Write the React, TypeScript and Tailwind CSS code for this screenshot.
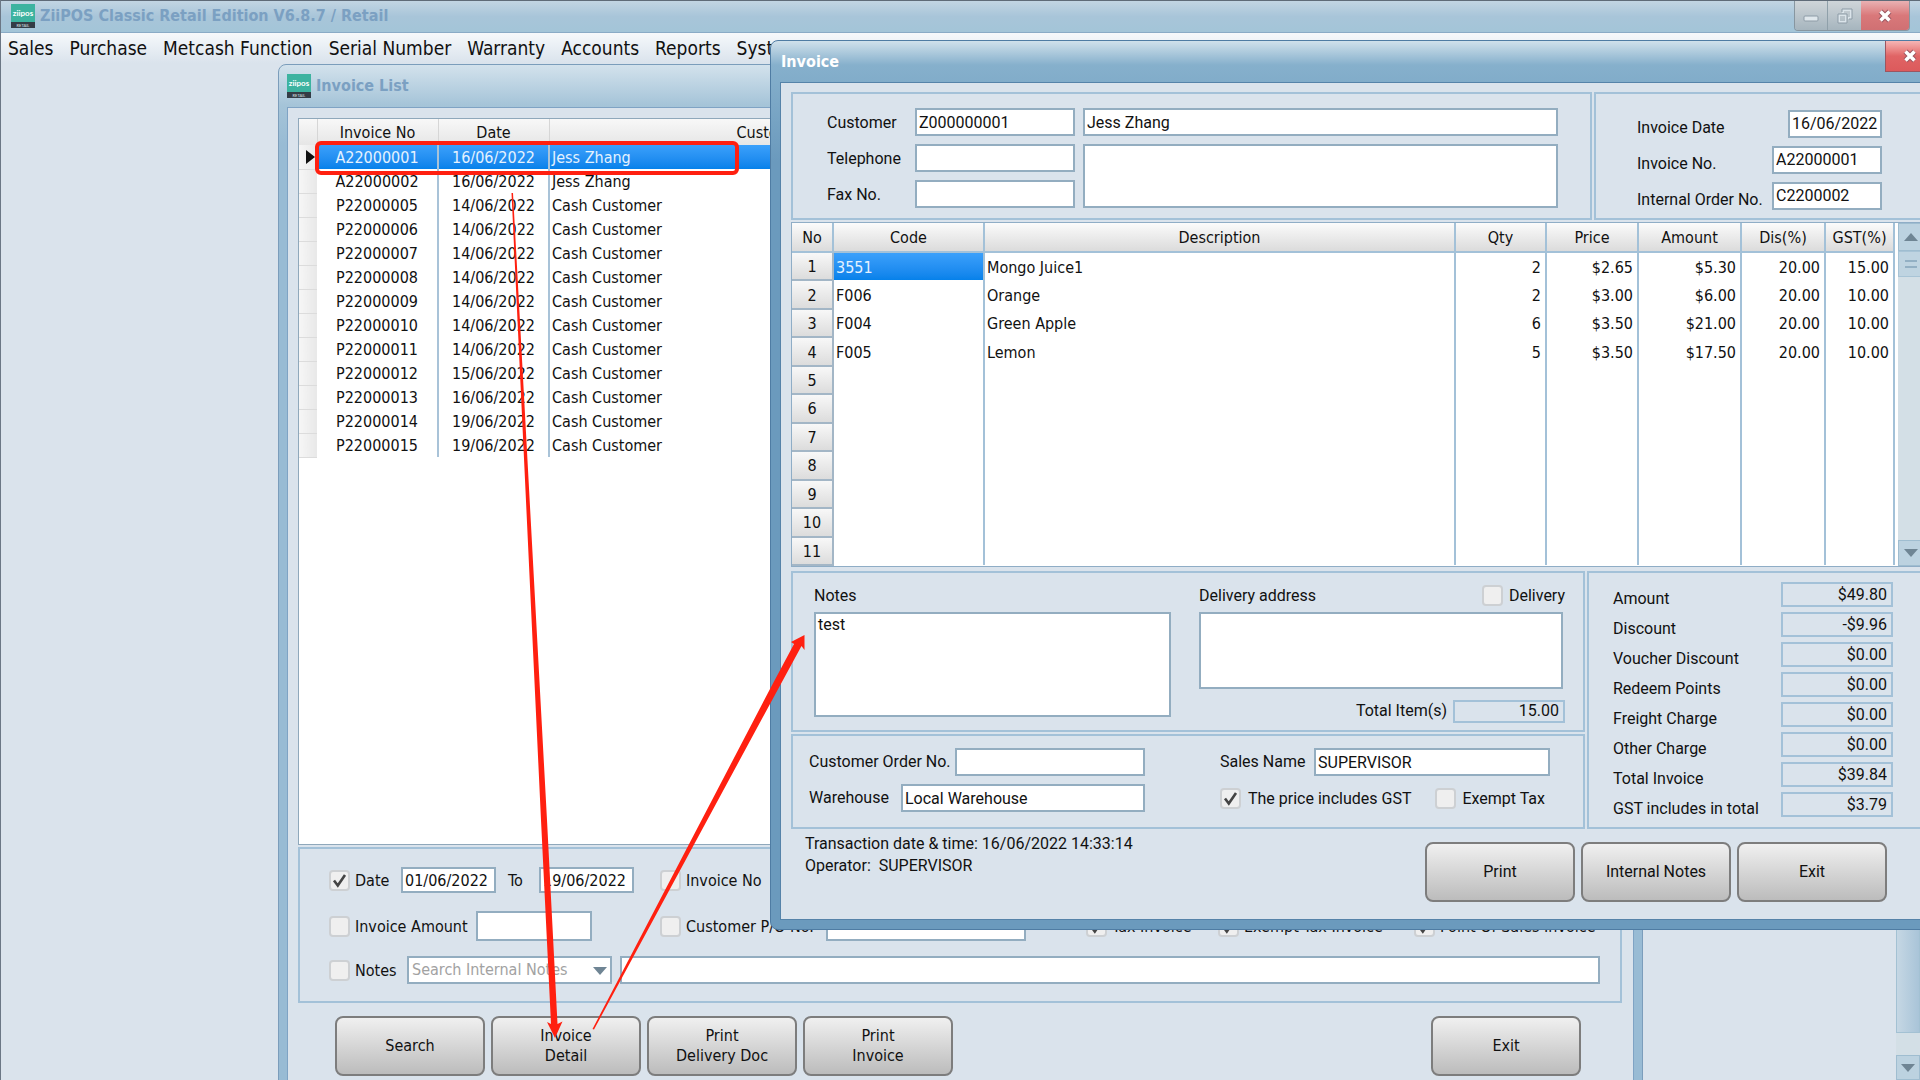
import type { ReactNode } from 'react';
import clsx from 'clsx';

const menuItems = ['Sales', 'Purchase', 'Metcash Function', 'Serial Number', 'Warranty', 'Accounts', 'Reports', 'System'];

const invoices = [
  ['A22000001', '16/06/2022', 'Jess Zhang'],
  ['A22000002', '16/06/2022', 'Jess Zhang'],
  ['P22000005', '14/06/2022', 'Cash Customer'],
  ['P22000006', '14/06/2022', 'Cash Customer'],
  ['P22000007', '14/06/2022', 'Cash Customer'],
  ['P22000008', '14/06/2022', 'Cash Customer'],
  ['P22000009', '14/06/2022', 'Cash Customer'],
  ['P22000010', '14/06/2022', 'Cash Customer'],
  ['P22000011', '14/06/2022', 'Cash Customer'],
  ['P22000012', '15/06/2022', 'Cash Customer'],
  ['P22000013', '16/06/2022', 'Cash Customer'],
  ['P22000014', '19/06/2022', 'Cash Customer'],
  ['P22000015', '19/06/2022', 'Cash Customer'],
];

const columns = [
  { title: 'No', width: 'w-[41px]' },
  { title: 'Code', width: 'w-[151px]' },
  { title: 'Description', width: 'w-[471px]' },
  { title: 'Qty', width: 'w-[91px]' },
  { title: 'Price', width: 'w-[92px]' },
  { title: 'Amount', width: 'w-[103px]' },
  { title: 'Dis(%)', width: 'w-[84px]' },
  { title: 'GST(%)', width: 'w-[69px]' },
];

const items = [
  ['3551', 'Mongo Juice1', '2', '$2.65', '$5.30', '20.00', '15.00'],
  ['F006', 'Orange', '2', '$3.00', '$6.00', '20.00', '10.00'],
  ['F004', 'Green Apple', '6', '$3.50', '$21.00', '20.00', '10.00'],
  ['F005', 'Lemon', '5', '$3.50', '$17.50', '20.00', '10.00'],
];

const totals = [
  ['Amount', '$49.80'],
  ['Discount', '-$9.96'],
  ['Voucher Discount', '$0.00'],
  ['Redeem Points', '$0.00'],
  ['Freight Charge', '$0.00'],
  ['Other Charge', '$0.00'],
  ['Total Invoice', '$39.84'],
  ['GST includes in total', '$3.79'],
];

const field = 'border-2 border-[#93adc0] bg-white px-[2px] text-[#111] outline-none';
const readonlyField = 'border-2 border-[#a3c1d8] bg-transparent px-1 text-right text-[#111] outline-none';
const panel = 'border-2 border-[#a3c1d8]';
const selected = 'bg-linear-to-b from-[#3aa0fb] to-[#0581ea] text-[#e4f2ff]';

function Logo() {
  return (
    <svg className="h-6 w-6 shrink-0" viewBox="0 0 24 24">
      <rect width="24" height="24" fill="#3db3a0" />
      <rect y="18" width="24" height="6" fill="#343c46" />
      <text x="12" y="12" fontSize="8" fontWeight="bold" fill="#fff" textAnchor="middle" fontFamily="Lato, sans-serif">ziipos</text>
      <text x="12" y="23" fontSize="4" fill="#dfe3e6" textAnchor="middle" fontFamily="Lato, sans-serif">RETAIL</text>
    </svg>
  );
}

function CrossIcon() {
  return (
    <svg className="h-4 w-4" viewBox="0 0 16 16" fill="none">
      <path d="M3.500 3.500l9 9M12.500 3.500l-9 9" stroke="#9a5560" strokeWidth="5.500" />
      <path d="M3.500 3.500l9 9M12.500 3.500l-9 9" stroke="#fff" strokeWidth="3.500" />
    </svg>
  );
}

function Check({ id, label, checked = false, className = '' }: { id: string; label: string; checked?: boolean; className?: string }) {
  return (
    <div className={clsx('flex items-center', className)}>
      <span className="relative h-[21px] w-[21px] shrink-0">
        <input
          id={id}
          type="checkbox"
          defaultChecked={checked}
          className="peer block h-full w-full appearance-none rounded border-2 border-[#cdd0d3] bg-[#efefef]"
        />
        <svg className="pointer-events-none absolute inset-0 hidden h-full w-full peer-checked:block" viewBox="0 0 21 21">
          <path d="M5 10.500l3.800 5L16 5" fill="none" stroke="#444" strokeWidth="2.600" />
        </svg>
      </span>
      <label htmlFor={id} className="pt-[2px] whitespace-nowrap">{label}</label>
    </div>
  );
}

function PushButton({ children }: { children: ReactNode }) {
  return (
    <button className="h-[60px] w-[150px] rounded-[8px] border-2 border-[#7d7d7d] bg-linear-to-b from-[#f0f0f0] to-[#bcbcbc] text-center leading-[20px] text-[#111]">
      {children}
    </button>
  );
}

function Arrow({ up = false }: { up?: boolean }) {
  return (
    <svg className={clsx('h-2 w-[14px]', up && 'rotate-180')} viewBox="0 0 14 8">
      <path d="M0 0h14L7 8z" fill="#6f8594" />
    </svg>
  );
}

function MainTitleBar() {
  return (
    <header className="flex h-[33px] items-start border-t border-b border-t-[#5f6b78] border-b-[#8aabc6] bg-linear-to-b from-[#c2d5e3] via-[#a8c5d9] to-[#a3c5d8] pl-[10px]">
      <div className="flex flex-1 items-center gap-[5px] pt-[3px]">
        <Logo />
        <h1 className="text-[16px] font-bold text-[#7ba0c2]">ZiiPOS Classic Retail Edition V6.8.7 / Retail</h1>
      </div>
      <div className="mr-[10px] flex h-[30px] overflow-hidden rounded-b border border-t-0 border-[#8796a0]">
        <button aria-label="Minimise" className="flex w-[33px] items-center justify-center border-r border-[#8fa0aa] bg-linear-to-b from-[#cfd5d9] to-[#a6b5be]">
          <svg className="h-4 w-4" viewBox="0 0 16 16">
            <rect x="1" y="8" width="14" height="5" rx="1" fill="#dfe7ec" stroke="#8d9ba6" />
          </svg>
        </button>
        <button aria-label="Restore" className="flex w-[33px] items-center justify-center bg-linear-to-b from-[#cfd5d9] to-[#a6b5be]">
          <svg className="h-4 w-4" viewBox="0 0 16 16" fill="none" stroke="#dbe4ea" strokeWidth="2">
            <path d="M6 5V2h8v8h-3" />
            <rect x="2" y="7" width="7" height="7" />
            <path d="M5 4V1h10v10h-3M1 6h9v9H1z" stroke="#8d9ba6" strokeWidth="1" />
          </svg>
        </button>
        <button aria-label="Close" className="flex w-[48px] items-center justify-center bg-linear-to-b from-[#e9b1b3] via-[#d9787a] to-[#d07073]">
          <CrossIcon />
        </button>
      </div>
    </header>
  );
}

function InvoiceList() {
  return (
    <section className="absolute top-[64px] right-[277px] left-[277px] rounded-t-lg border border-[#7b9dbb] bg-linear-to-b from-[#d3e2ec] via-[#a5c4d8] via-[40px] to-[#98bbd4] to-[80px] px-[8px] text-[16px]">
      <div className="flex h-[42px] items-center gap-[5px]">
        <Logo />
        <h2 className="text-[16px] font-bold text-[#7ba0c2]">Invoice List</h2>
      </div>
      <div className="border border-[#7fa3c4] bg-[#dae3ec] pt-[10px] pr-[11px] pb-6 pl-[10px]">
        <div className="h-[727px] overflow-hidden border border-[#8fa8bb] bg-white">
          <table className="w-full table-fixed border-collapse">
            <colgroup>
              <col className="w-[18px]" />
              <col className="w-[121px]" />
              <col className="w-[111px]" />
              <col className="w-[492px]" />
              <col />
            </colgroup>
            <thead>
              <tr className="h-[26px] bg-linear-to-b from-[#f8f8f8] to-[#e6e6e6] leading-[22px]">
                <th className="border-r border-[#d6d6d6]" />
                <th className="border-r border-[#d6d6d6] p-0 pt-[2px] font-normal">Invoice No</th>
                <th className="border-r border-[#d6d6d6] p-0 pt-[2px] font-normal">Date</th>
                <th className="border-r border-[#d6d6d6] p-0 pt-[2px] font-normal">Customer Name</th>
                <th />
              </tr>
            </thead>
            <tbody>
              {invoices.map(([no, date, customer], i) => (
                <tr key={no} className={clsx('h-[24px] leading-[22px]', i === 0 && selected)}>
                  <td className="border-b border-[#dcdcdc] bg-linear-to-r from-[#f6f6f6] to-[#e8e8e8] p-0">
                    {i === 0 && (
                      <svg className="ml-[6px] h-[16px] w-[10px]" viewBox="0 0 10 16">
                        <path d="M1 1l9 7-9 7z" fill="#111" />
                      </svg>
                    )}
                  </td>
                  <td className="border-r-2 border-[#a9c3d8] p-0 pt-[2px] text-center">{no}</td>
                  <td className="border-r-2 border-[#a9c3d8] p-0 pt-[2px] text-center">{date}</td>
                  <td className="p-0 pt-[2px] pl-[2px]">{customer}</td>
                  <td />
                </tr>
              ))}
            </tbody>
          </table>
        </div>

        <form className={clsx(panel, 'mt-[2px] flex flex-col gap-4 pt-4 pb-[18px] pl-[29px]')}>
          <div className="flex h-[30px] items-center">
            <div className="flex w-[331px] items-center">
              <Check id="byDate" label="Date" checked className="w-[72px] gap-[5px]" />
              <input aria-label="From date" defaultValue="01/06/2022" className={clsx(field, 'h-[26px] w-[95px]')} />
              <label htmlFor="dateTo" className="w-[43px] pt-[2px] pl-3">To</label>
              <input id="dateTo" defaultValue="19/06/2022" className={clsx(field, 'h-[26px] w-[95px]')} />
            </div>
            <Check id="byNo" label="Invoice No" className="gap-[5px]" />
          </div>
          <div className="flex h-[30px] items-center">
            <div className="flex w-[331px] items-center">
              <Check id="byAmount" label="Invoice Amount" className="w-[147px] gap-[5px]" />
              <input aria-label="Invoice amount" className={clsx(field, 'h-[30px] w-[116px]')} />
            </div>
            <div className="flex w-[426px] items-center">
              <Check id="byPo" label="Customer P/O No." className="w-[166px] gap-[5px]" />
              <input aria-label="Customer P/O number" className={clsx(field, 'h-[30px] w-[200px]')} />
            </div>
            <Check id="tax" label="Tax Invoice" checked className="w-[132px] gap-[5px]" />
            <Check id="exempt" label="Exempt Tax Invoice" checked className="w-[196px] gap-[5px]" />
            <Check id="pos" label="Point Of Sales Invoice" checked className="gap-[5px]" />
          </div>
          <div className="flex h-[26px] items-center">
            <Check id="byNotes" label="Notes" className="w-[78px] gap-[5px]" />
            <div className="relative mr-2">
              <select aria-label="Notes type" className="block h-[28px] w-[205px] appearance-none border-2 border-[#93adc0] bg-white pl-[3px] text-[#a2a2a2] outline-none">
                <option>Search Internal Notes</option>
              </select>
              <span className="pointer-events-none absolute top-[11px] right-[5px] flex">
                <Arrow />
              </span>
            </div>
            <input aria-label="Notes text" className={clsx(field, 'mr-[20px] h-[28px] flex-1')} />
          </div>
        </form>

        <div className="mt-[13px] flex gap-[6px] pr-[41px] pl-[37px]">
          <PushButton>Search</PushButton>
          <PushButton>Invoice<br />Detail</PushButton>
          <PushButton>Print<br />Delivery Doc</PushButton>
          <PushButton>Print<br />Invoice</PushButton>
          <div className="ml-auto">
            <PushButton>Exit</PushButton>
          </div>
        </div>
      </div>
    </section>
  );
}

function CustomerPanel() {
  return (
    <div className={clsx(panel, 'flex w-[801px] gap-2 pt-[14px] pb-[10px] pl-[34px]')}>
      <div className="flex flex-col gap-2">
        {[
          ['customer', 'Customer', 'Z000000001'],
          ['telephone', 'Telephone', ''],
          ['fax', 'Fax No.', ''],
        ].map(([id, label, value]) => (
          <div key={id} className="flex h-[28px] items-center">
            <label htmlFor={id} className="w-[88px] pt-[2px]">{label}</label>
            <input id={id} defaultValue={value} className={clsx(field, 'h-full w-[160px]')} />
          </div>
        ))}
      </div>
      <div className="flex flex-col gap-2">
        <input aria-label="Customer name" defaultValue="Jess Zhang" className={clsx(field, 'h-[28px] w-[475px]')} />
        <textarea aria-label="Customer address" className={clsx(field, 'h-[64px] w-[475px] resize-none')} />
      </div>
    </div>
  );
}

function NumbersPanel() {
  return (
    <div className={clsx(panel, 'flex flex-1 flex-col gap-2 pt-4 pb-2 pl-[41px]')}>
      {[
        ['date', 'Invoice Date', '16/06/2022', 'w-[94px]'],
        ['number', 'Invoice No.', 'A22000001', 'w-[110px]'],
        ['order', 'Internal Order No.', 'C2200002', 'w-[110px]'],
      ].map(([id, label, value, width]) => (
        <div key={id} className="flex h-[28px] w-[245px] items-start justify-between">
          <label htmlFor={id} className="leading-[36px]">{label}</label>
          <input id={id} defaultValue={value} className={clsx(field, 'h-full pb-[2px]', width)} />
        </div>
      ))}
    </div>
  );
}

function ItemsTable() {
  return (
    <div className="mt-[2px] flex border-y border-l border-[#8fadc6] bg-white">
      <table className="h-[343px] w-[1102px] table-fixed border-collapse font-['DejaVu_Sans_Condensed','DejaVu_Sans',sans-serif] text-[16px] leading-[20px]">
        <thead>
          <tr className="h-[29px] bg-linear-to-b from-[#fbfbfb] to-[#dadada]">
            {columns.map((c) => (
              <th key={c.title} className={clsx(c.width, 'border-r-2 border-b-2 border-[#a3c1d8] p-0 pt-[2px] font-normal')}>{c.title}</th>
            ))}
          </tr>
        </thead>
        <tbody>
          {Array.from({ length: 11 }, (_, row) => (
            <tr key={row}>
              <td className="border-r-2 border-b-2 border-[#a3b6c6] bg-linear-to-b from-[#f8f8f8] to-[#dcdcdc] p-0 pt-[2px] text-center">{row + 1}</td>
              {columns.slice(1).map((c, i) => (
                <td
                  key={c.title}
                  className={clsx('border-r-2 border-[#a3c1d8] p-0 pt-[2px]', i < 2 ? 'pl-[2px]' : 'pr-[4px] text-right', row === 0 && i === 0 && selected)}
                >
                  {items[row]?.[i]}
                </td>
              ))}
            </tr>
          ))}
        </tbody>
      </table>
      <div className="ml-[3px] flex flex-1 flex-col bg-[#d3dfe6]">
        <button aria-label="Scroll up" className="flex h-[28px] items-center justify-center border border-[#9fbdd0] bg-[#bcd2e0]">
          <Arrow up />
        </button>
        <div className="flex h-[26px] flex-col items-center justify-center gap-1 border border-[#a8c4d6] bg-[#bfd4e1]">
          <span className="h-[2px] w-3 bg-[#93b0c4]" />
          <span className="h-[2px] w-3 bg-[#93b0c4]" />
        </div>
        <button aria-label="Scroll down" className="mt-auto flex h-[26px] items-center justify-center border border-[#9fbdd0] bg-[#bcd2e0]">
          <Arrow />
        </button>
      </div>
    </div>
  );
}

function InvoiceWindow() {
  return (
    <section className="absolute top-[40px] right-[-24px] left-[769px] rounded-lg border border-[#4f7ca3] bg-linear-to-b from-[#d0e1eb] via-[#86b0cc] via-[24px] to-[#6b9abd] to-[120px] px-[9px] pb-[9px] font-[Roboto,sans-serif] text-[16px]">
      <div className="flex h-[41px] items-start justify-between">
        <h2 className="pt-[9px] pl-px font-['DejaVu_Sans_Condensed','DejaVu_Sans',sans-serif] text-[16px] font-bold text-white">Invoice</h2>
        <button aria-label="Close invoice" className="flex h-[31px] w-[49px] items-center justify-center border border-t-0 border-[#9c5560] bg-linear-to-b from-[#f5b5b5] via-[#e06465] to-[#dc5a5c]">
          <CrossIcon />
        </button>
      </div>
      <div className="border border-[#5583a9] bg-[#dae3ec] px-[10px] pt-[9px] pb-[17px]">
        <div className="flex gap-[2px]">
          <CustomerPanel />
          <NumbersPanel />
        </div>

        <ItemsTable />

        <div className="mt-1 flex gap-[2px]">
          <div className="flex w-[794px] flex-col gap-[2px]">
            <div className={clsx(panel, 'flex h-[161px] gap-7 pt-[11px] pl-[21px]')}>
              <div className="flex flex-col">
                <label htmlFor="notes" className="h-[28px] leading-[24px]">Notes</label>
                <textarea id="notes" defaultValue="test" className={clsx(field, 'h-[105px] w-[357px] resize-none leading-[22px]')} />
              </div>
              <div className="flex w-[366px] flex-col">
                <div className="flex h-[28px] items-start justify-between">
                  <label htmlFor="address" className="leading-[24px]">Delivery address</label>
                  <Check id="delivery" label="Delivery" className="gap-[6px] leading-[20px]" />
                </div>
                <textarea id="address" className={clsx(field, 'h-[77px] w-[364px] resize-none')} />
                <div className="mt-[10px] flex items-center justify-end gap-[6px]">
                  <label htmlFor="totalItems">Total Item(s)</label>
                  <input id="totalItems" readOnly value="15.00" className={clsx(readonlyField, 'h-[23px] w-[112px]')} />
                </div>
              </div>
            </div>
            <div className={clsx(panel, 'flex gap-[75px] pt-[12px] pb-[15px] pl-4')}>
              <div className="flex w-[336px] flex-col gap-2">
                <div className="flex h-[28px] items-center justify-between">
                  <label htmlFor="customerOrder" className="whitespace-nowrap">Customer Order No.</label>
                  <input id="customerOrder" className={clsx(field, 'h-full w-[190px]')} />
                </div>
                <div className="flex h-[28px] items-center justify-between">
                  <label htmlFor="warehouse">Warehouse</label>
                  <input id="warehouse" defaultValue="Local Warehouse" className={clsx(field, 'h-full w-[244px]')} />
                </div>
              </div>
              <div className="flex w-[330px] flex-col gap-2">
                <div className="flex h-[28px] items-center justify-between">
                  <label htmlFor="salesName">Sales Name</label>
                  <input id="salesName" defaultValue="SUPERVISOR" className={clsx(field, 'h-full w-[236px]')} />
                </div>
                <div className="flex h-[28px] items-center gap-6">
                  <Check id="includesGst" label="The price includes GST" checked className="gap-[7px]" />
                  <Check id="exemptTax" label="Exempt Tax" className="gap-[6px]" />
                </div>
              </div>
            </div>
          </div>
          <div className={clsx(panel, 'flex flex-1 flex-col gap-[5px] pt-[9px] pl-[24px]')}>
            {totals.map(([label, value]) => (
              <div key={label} className="flex h-[25px] w-[280px] justify-between">
                <label htmlFor={label} className="leading-[34px]">{label}</label>
                <input id={label} readOnly value={value} className={clsx(readonlyField, 'h-full w-[112px]')} />
              </div>
            ))}
          </div>
        </div>

        <div className="flex justify-between pr-[36px] pl-[14px]">
          <p className="pt-1 leading-[22px]">
            Transaction date &amp; time: 16/06/2022 14:33:14
            <br />
            Operator: &nbsp;SUPERVISOR
          </p>
          <div className="flex gap-[6px] pt-[13px]">
            <PushButton>Print</PushButton>
            <PushButton>Internal Notes</PushButton>
            <PushButton>Exit</PushButton>
          </div>
        </div>
      </div>
    </section>
  );
}

export default function App() {
  return (
    <div className="relative h-screen overflow-hidden border-l border-[#6b7785] bg-[#dae3ec] font-['DejaVu_Sans_Condensed','DejaVu_Sans',sans-serif] text-[#111]">
      <MainTitleBar />
      <nav className="flex h-[30px] items-center gap-4 bg-linear-to-b from-[#f6f9fb] to-[#dae3ec] pl-[7px] text-[19px]">
        {menuItems.map((item) => (
          <a key={item} href="#" className="whitespace-nowrap">{item}</a>
        ))}
      </nav>

      {/* desktop scrollbar */}
      <div className="absolute top-[64px] right-0 bottom-0 flex w-6 flex-col justify-between bg-[#d3dfe6]">
        <div className="h-[969px] border border-[#a3c1d3] bg-linear-to-r from-[#c5d7e4] to-[#a9c4d8]" />
        <button aria-label="Scroll desktop down" className="flex h-[25px] items-center justify-center border border-[#9fbdd0] bg-[#bcd2e0]">
          <Arrow />
        </button>
      </div>

      <InvoiceList />
      <InvoiceWindow />

      {/* callouts */}
      <div className="pointer-events-none absolute top-[141px] left-[314px] h-[34px] w-[424px] rounded-md border-4 border-[#ff2010]" />
      <svg className="pointer-events-none absolute top-0 left-0 h-[1080px] w-[1920px]" viewBox="1 0 1920 1080" fill="#ff2010">
        <path d="M511.500 193h1.500L547 820l10.500 204 5-2.500L555 1038l-8-16 4 2L541 820z" />
        <path d="M592.500 1029l177.500-340 24-45-3-2 13.500-7v15l-3-4L770 704 594 1029.500z" />
      </svg>
    </div>
  );
}
